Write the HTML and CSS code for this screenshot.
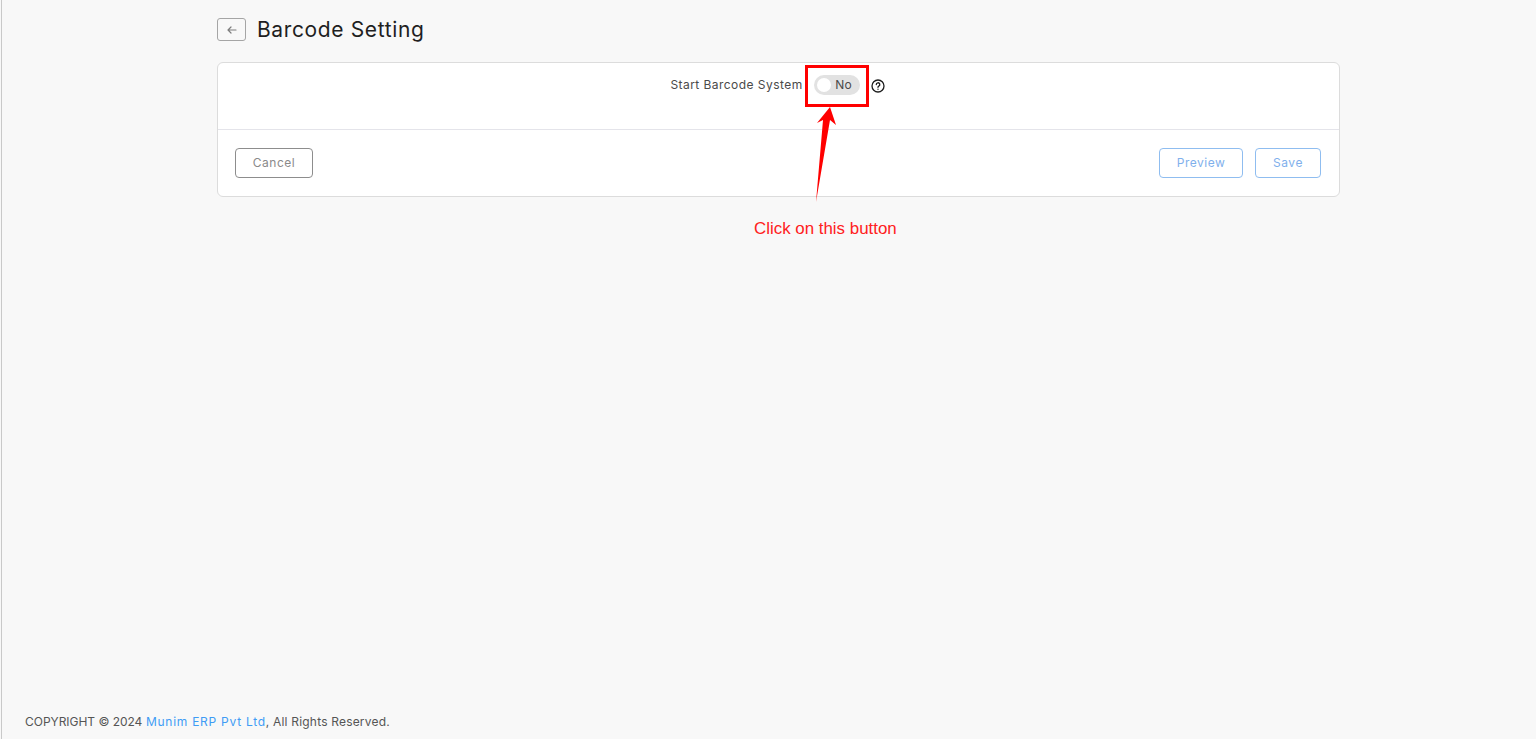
FILE: index.html
```html
<!DOCTYPE html>
<html lang="en">
<head>
    <meta charset="UTF-8">
    <meta name="viewport" content="width=device-width, initial-scale=1.0">
    <title>Barcode Setting</title>
    <link rel="stylesheet" href="styles.css">
</head>
<body>
    <div class="edge"></div>
    <div class="page">
        <main class="content">
            <div class="title-row">
                <button class="back-btn" aria-label="Back">
                    <svg width="12" height="12" viewBox="0 0 12 12" fill="none" stroke="#7d7d7d" stroke-width="1.2" stroke-linecap="round" stroke-linejoin="round">
                        <path d="M10 6H2M5 3L2 6l3 3"/>
                    </svg>
                </button>
                <h1>Barcode Setting</h1>
            </div>

            <div class="card">
                <div class="card-body">
                    <span class="field-label">Start Barcode System</span>
                    <span class="toggle">
                        <span class="knob"></span>
                        <span class="toggle-text">No</span>
                    </span>
                    <svg class="help" width="14" height="14" viewBox="0 0 14 14" fill="none" stroke="#1c1c1c" stroke-width="1.3" stroke-linecap="round">
                        <circle cx="7" cy="7" r="6"/>
                        <path d="M5.3 5.5A1.75 1.75 0 1 1 7.8 7.1C7.2 7.4 7 7.7 7 8.3"/>
                        <path d="M7 10.2v.1"/>
                    </svg>
                </div>
                <div class="card-footer">
                    <button class="btn btn-cancel">Cancel</button>
                    <div class="btn-group">
                        <button class="btn btn-blue btn-preview">Preview</button>
                        <button class="btn btn-blue btn-save">Save</button>
                    </div>
                </div>
            </div>
        </main>

        <footer class="copyright">
            <span class="copy-year">COPYRIGHT © 2024</span> <a href="#">Munim ERP Pvt Ltd</a>, All Rights Reserved.
        </footer>
    </div>

    <!-- red annotation drawn on top of the screenshot -->
    <div class="mark-box"></div>
    <svg class="mark-arrow" width="30" height="100" viewBox="0 0 30 100">
        <path d="M16 2L22 20 16 15 2 97 9 15 3 18Z" fill="#ff0000"/>
    </svg>
    <div class="mark-text">Click on this button</div>
</body>
</html>
```

FILE: styles.css
```css
* {
    box-sizing: border-box;
}
html, body {
    height: 100%;
}
body {
    margin: 0;
    display: flex;
    height: 739px;
    overflow: hidden;
    background-color: #f8f8f8;
    font-family: Inter, "Noto Sans", sans-serif;
}
.edge {
    width: 2px;
    background-color: #f8f8f8;
    border-right: 1px solid #c9c9c9;
}
.page {
    flex: 1;
    display: flex;
    flex-direction: column;
}
.content {
    flex: 1;
    padding: 18px 196px 0 215px;
}
.title-row {
    display: flex;
    align-items: center;
    height: 23px;
    margin-bottom: 21px;
}
.back-btn {
    width: 29px;
    height: 23px;
    padding: 0;
    display: flex;
    align-items: center;
    justify-content: center;
    background-color: #f8f8f8;
    border: 1px solid #a5a5a5;
    border-radius: 3px;
}
h1 {
    margin: 0 0 0 11px;
    font-size: 21px;
    font-weight: 400;
    letter-spacing: 0.63px;
    color: #1f1f1f;
}
.card {
    background-color: #fff;
    border: 1px solid #dcdcdc;
    border-radius: 6px;
}
.card-body {
    height: 67px;
    padding: 12px 2px 0 0;
    display: flex;
    justify-content: center;
    align-items: flex-start;
    border-bottom: 1px solid #e4e4ea;
}
.field-label {
    margin-top: 2px;
    font-size: 12px;
    line-height: 15px;
    letter-spacing: 0.45px;
    color: #4a4a4a;
    white-space: nowrap;
}
.toggle {
    width: 46px;
    height: 20px;
    margin-left: 11px;
    padding: 0 8px 2px 3px;
    display: flex;
    align-items: center;
    justify-content: space-between;
    background-color: #e2e2e2;
    border-radius: 10px;
}
.knob {
    width: 14px;
    height: 14px;
    margin-top: 2px;
    background-color: #fff;
    border-radius: 50%;
}
.toggle-text {
    font-size: 12px;
    color: #4a4a4a;
}
.help {
    margin: 4px 0 0 11px;
}
.card-footer {
    height: 66px;
    padding: 0 18px 0 17px;
    display: flex;
    align-items: center;
    justify-content: space-between;
}
.btn {
    height: 30px;
    padding: 0 0 2px;
    background-color: #fff;
    border-radius: 4px;
    font-family: inherit;
    font-size: 12px;
    letter-spacing: 0.5px;
}
.btn-cancel {
    width: 78px;
    border: 1px solid #8d8d8d;
    color: #8a8a8a;
}
.btn-group {
    display: flex;
    gap: 12px;
}
.btn-blue {
    border: 1px solid #8fbdf0;
    color: #7fb0ec;
}
.btn-preview {
    width: 84px;
}
.btn-save {
    width: 66px;
}
.copyright {
    padding: 0 0 10px 23px;
    font-size: 12px;
    line-height: 15px;
    letter-spacing: 0.19px;
    color: #555;
}
.copy-year {
    letter-spacing: -0.03px;
}
.copyright a {
    letter-spacing: 0.74px;
    color: #3f9cf5;
    text-decoration: none;
}
.mark-box {
    position: absolute;
    left: 805px;
    top: 65px;
    width: 64px;
    height: 42px;
    border: 3px solid #ff0000;
}
.mark-arrow {
    position: absolute;
    left: 814px;
    top: 105px;
}
.mark-text {
    position: absolute;
    left: 754px;
    top: 219px;
    font-family: "Liberation Sans", Arial, sans-serif;
    font-size: 16.9px;
    line-height: 19px;
    color: #ff2020;
}
```
